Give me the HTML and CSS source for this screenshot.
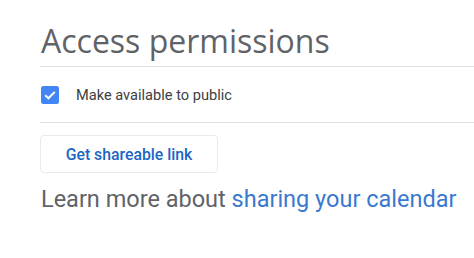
FILE: index.html
```html
<!DOCTYPE html>
<html>
<head>
<meta charset="utf-8">
<link rel="stylesheet" href="styles.css">
</head>
<body>
<div class="page">
  <h1 class="title">Access permissions</h1>
  <div class="row">
    <span class="checkbox">
      <svg width="18" height="18" viewBox="0 0 18 18"><rect x="0" y="0" width="18" height="18" rx="2.5" fill="#4285f4"/><path d="M4.2 9.2 L7.4 12.3 L13.8 5.9" fill="none" stroke="#fff" stroke-width="2"/></svg>
    </span>
    <span class="label">Make available to public</span>
  </div>
  <div class="actions">
    <button class="btn">Get shareable link</button>
  </div>
  <p class="learn">Learn more about <a class="link">sharing your calendar</a></p>
</div>
</body>
</html>
```
FILE: styles.css
```css
html, body { margin: 0; padding: 0; background: #fff; }
.page { padding: 16px 0 0 40px; }
.title {
  margin: 0;
  font-family: "Open Sans", sans-serif;
  font-weight: 400;
  font-size: 32px;
  line-height: 50px;
  color: #5f6368;
  padding-left: 1px;
  border-bottom: 1px solid #e0e0e0;
  height: 50px;
}
.row {
  display: flex;
  align-items: center;
  height: 55px;
  border-bottom: 1px solid #e0e0e0;
  padding-left: 1px;
}
.checkbox { width: 18px; height: 18px; display: block; margin-top: 1px; }
.checkbox svg { display: block; }
.label {
  margin-left: 17px;
  font-family: Roboto, sans-serif;
  font-size: 14.6px;
  color: #3c4043;
}
.actions { padding-top: 12px; }
.btn {
  display: block;
  width: 178px;
  height: 38px;
  background: #fff;
  border: 1px solid #e8eaed;
  border-radius: 4px;
  font-family: Roboto, sans-serif;
  font-weight: 500;
  font-size: 15.8px;
  color: #1a66c4;
  padding: 0;
}
.learn {
  margin: 10px 0 0 1px;
  font-family: Roboto, sans-serif;
  font-size: 23.5px;
  line-height: 32px;
  color: #5f6368;
}
.link { color: #3b78d0; }
```
